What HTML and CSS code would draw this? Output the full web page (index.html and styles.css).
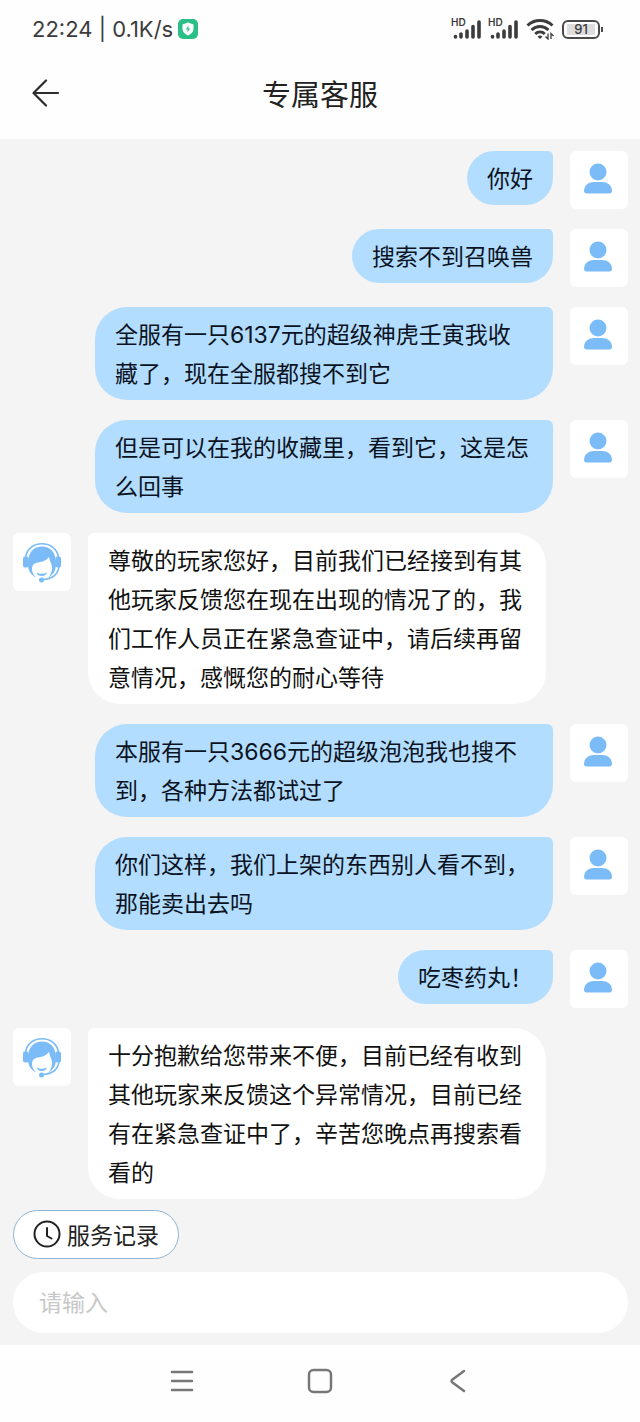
FILE: index.html
```html
<!DOCTYPE html>
<html lang="zh-CN">
<head>
<meta charset="utf-8">
<meta name="viewport" content="width=device-width, initial-scale=1">
<title>专属客服</title>
<link rel="stylesheet" href="styles.css">
</head>
<body>
<svg class="defs" aria-hidden="true">
  <symbol id="user" viewBox="0 0 58 58">
    <circle cx="28" cy="21" r="8.500"/>
    <path d="M14 40c0-6 5-9 10-9h8c5 0 10 3 10 9 0 1.600-1 2.500-2.500 2.500h-23C15 42.500 14 41.600 14 40z"/>
  </symbol>
  <symbol id="agent" viewBox="0 0 58 58">
    <path d="M12.500 25C14 6 44 6 45.500 25" fill="none" stroke="currentColor" stroke-width="1.600"/>
    <path d="M15 33C14 19 21 13.500 29 13.500S44 19 43 33c-.5 5-3 9-7.500 11.500 2.300-3 3.500-6 3.500-9.500 0-4-2-6-3-11-3 4-8 5-13 6-3 1-4 3-4 6 0 3 1.500 6 4 8.500C18 42 15.500 38 15 33z"/>
    <rect x="10" y="23.500" width="5.500" height="11" rx="1.800"/>
    <rect x="42.500" y="23.500" width="5.500" height="11" rx="1.800"/>
    <path d="M23.500 39.500q5.500 2.500 10.500 0-1.200 3.500-5.200 3.500t-5.300-3.500z"/>
    <path d="M46 34c-1.500 8-7.500 12-16 12.500" fill="none" stroke="currentColor" stroke-width="1.500"/>
    <circle cx="28.500" cy="47" r="2.500"/>
  </symbol>
  <symbol id="signal" viewBox="0 0 31 22">
    <path d="M3.500 19v-.5M9 19v-3M15 19v-6M21 19V8.500M27 19V4" fill="none" stroke="currentColor" stroke-width="3.600" stroke-linecap="round"/>
  </symbol>
</svg>

<header class="status">
  <div class="status-left">
    <span>22:24 | 0.1K/s</span>
    <svg class="shield" viewBox="0 0 20 20" aria-hidden="true">
      <rect width="20" height="20" rx="5" fill="#2bbf88"/>
      <path d="M10 3.500l5.500 2v4.500c0 3-2.200 5-5.500 6.500C6.700 15 4.500 13 4.500 10V5.500z" fill="#fff"/>
      <path d="M10.700 6.500L7.800 10.500h2l-.6 3.200 3-4.200h-2z" fill="#2bbf88"/>
    </svg>
  </div>
  <div class="status-right">
    <div class="cell"><span class="hd">HD</span><svg class="bars" aria-hidden="true"><use href="#signal"/></svg></div>
    <div class="cell"><span class="hd">HD</span><svg class="bars" aria-hidden="true"><use href="#signal"/></svg></div>
    <svg class="wifi" viewBox="0 0 28 22" aria-hidden="true">
      <g fill="none" stroke="currentColor" stroke-width="3">
        <path d="M1.500 7.500C8.500.8 19.500.8 26.500 7.500"/>
        <path d="M5.500 12C10.500 7.300 17.500 7.300 22.500 12"/>
        <path d="M9.200 16C12 13.300 16 13.300 18.800 16"/>
      </g>
      <path d="M11.500 18.500q2.500-2 5 0L14 21z" fill="currentColor"/>
      <path d="M22 15.500v5.500l-2.500-2.500M25 21v-5.500l2.500 2.500" fill="none" stroke="currentColor" stroke-width="1.300"/>
    </svg>
    <div class="battery"><span class="level">91</span></div>
  </div>
</header>

<div class="titlebar">
  <button class="back" type="button" aria-label="返回">
    <svg viewBox="0 0 28 28" aria-hidden="true"><path d="M26 14H1.500M14 1.500L1.500 14 14 26.500" fill="none" stroke="currentColor" stroke-width="2.200" stroke-linecap="round" stroke-linejoin="round"/></svg>
  </button>
  <h1 class="title">专属客服</h1>
</div>

<main class="chat">
  <div class="row mine"><p class="bubble">你好</p><svg class="avatar"><use href="#user"/></svg></div>
  <div class="row mine"><p class="bubble">搜索不到召唤兽</p><svg class="avatar"><use href="#user"/></svg></div>
  <div class="row mine"><p class="bubble">全服有一只6137元的超级神虎壬寅我收藏了，现在全服都搜不到它</p><svg class="avatar"><use href="#user"/></svg></div>
  <div class="row mine"><p class="bubble">但是可以在我的收藏里，看到它，这是怎么回事</p><svg class="avatar"><use href="#user"/></svg></div>
  <div class="row"><svg class="avatar"><use href="#agent"/></svg><p class="bubble">尊敬的玩家您好，目前我们已经接到有其他玩家反馈您在现在出现的情况了的，我们工作人员正在紧急查证中，请后续再留意情况，感慨您的耐心等待</p></div>
  <div class="row mine"><p class="bubble">本服有一只3666元的超级泡泡我也搜不到，各种方法都试过了</p><svg class="avatar"><use href="#user"/></svg></div>
  <div class="row mine"><p class="bubble">你们这样，我们上架的东西别人看不到，那能卖出去吗</p><svg class="avatar"><use href="#user"/></svg></div>
  <div class="row mine"><p class="bubble">吃枣药丸！</p><svg class="avatar"><use href="#user"/></svg></div>
  <div class="row"><svg class="avatar"><use href="#agent"/></svg><p class="bubble">十分抱歉给您带来不便，目前已经有收到其他玩家来反馈这个异常情况，目前已经有在紧急查证中了，辛苦您晚点再搜索看看的</p></div>
</main>

<footer class="composer">
  <button class="record" type="button">
    <svg class="clock" viewBox="0 0 28 28" aria-hidden="true"><g fill="none" stroke="currentColor" stroke-width="2" stroke-linecap="round" stroke-linejoin="round"><circle cx="14" cy="14" r="12.500"/><path d="M14 8v8l4.500 2.500"/></g></svg>
    服务记录
  </button>
  <input class="entry" type="text" placeholder="请输入" aria-label="请输入">
</footer>

<nav class="system">
  <button type="button" aria-label="最近任务"><svg viewBox="0 0 26 26"><path d="M3 4h20M3 13h20M3 22h20"/></svg></button>
  <button type="button" aria-label="主屏幕"><svg viewBox="0 0 26 26"><rect x="2" y="2" width="22" height="22" rx="4.500"/></svg></button>
  <button type="button" aria-label="返回"><svg viewBox="0 0 26 26"><path d="M19 3L7.500 11.500q-2 1.500 0 3L19 23"/></svg></button>
</nav>
</body>
</html>
```

FILE: styles.css
```css
* {
  box-sizing: border-box;
}

body {
  margin: 0;
  background: #fefefe;
  color: #111;
  font-family: Inter, "Noto Sans CJK SC", sans-serif;
  font-size: 23px;
}

button,
input {
  font: inherit;
}

button {
  padding: 0;
  border: 0;
  background: none;
  cursor: pointer;
}

svg {
  display: block;
  flex: none;
}

.defs {
  display: none;
}

.status {
  display: flex;
  align-items: center;
  justify-content: space-between;
  height: 58px;
  padding: 0 40px 0 32px;
  color: #3c3c3c;
  font-size: 22px;
}

.status-left,
.status-right {
  display: flex;
  align-items: center;
}

.status-left {
  gap: 5px;
}

.status-right {
  gap: 6px;
}

.shield {
  width: 20px;
  height: 20px;
}

.cell {
  position: relative;
}

.hd {
  position: absolute;
  top: 0;
  left: -1px;
  font-size: 10px;
  font-weight: 600;
  line-height: 8px;
}

.bars {
  width: 31px;
  height: 22px;
}

.wifi {
  width: 28px;
  height: 22px;
}

.battery {
  position: relative;
  display: flex;
  width: 38px;
  height: 19px;
  margin-left: 2px;
  padding: 2px 3px;
  border: 2px solid #4a4a4a;
  border-radius: 6px;
}

.battery::after {
  content: "";
  position: absolute;
  top: 5px;
  right: -5px;
  width: 2px;
  height: 5px;
  background: #4a4a4a;
}

.level {
  flex: 1;
  background: #dedede;
  font-size: 13px;
  font-weight: 500;
  line-height: 11px;
  text-align: center;
}

.titlebar {
  display: grid;
  grid-template-columns: 28px 1fr 28px;
  align-items: center;
  height: 81px;
  padding: 0 32px 12px;
}

.back {
  color: #2d2d2d;
}

.back svg {
  width: 28px;
  height: 28px;
}

.title {
  margin: 0;
  font-size: 29px;
  font-weight: 400;
  text-align: center;
  color: #222;
}

.chat {
  display: flex;
  flex-direction: column;
  gap: 20px;
  padding: 12px 12px 11px 13px;
  background: #f4f4f4;
}

.row {
  display: flex;
  align-items: flex-start;
  gap: 17px;
}

.mine {
  justify-content: flex-end;
}

.avatar {
  width: 58px;
  height: 58px;
  border-radius: 6px;
  background: #fff;
  color: #7bbcf8;
  fill: #7bbcf8;
}

.bubble {
  max-width: calc(100% - 157px);
  margin: 0;
  padding: 9px 20px 6px;
  border-radius: 6px 32px 32px 32px;
  background: #fff;
  line-height: 39px;
}

.mine .bubble {
  border-radius: 32px 6px 32px 32px;
  background: #b3ddff;
  color: #0b1322;
}

.composer {
  display: flex;
  flex-direction: column;
  align-items: flex-start;
  gap: 13px;
  padding: 0 12px 12px 13px;
  background: #f4f4f4;
}

.record {
  display: flex;
  align-items: center;
  gap: 6px;
  height: 49px;
  padding: 0 19px 2px;
  border: 1px solid #91b4d3;
  border-radius: 25px;
  background: #fff;
  color: #222;
}

.clock {
  width: 28px;
  height: 28px;
}

.entry {
  width: 100%;
  height: 61px;
  padding: 0 26px;
  border: 0;
  border-radius: 31px;
  background: #fff;
  color: #111;
}

.entry::placeholder {
  color: #c8c8c8;
  opacity: 1;
}

.system {
  display: flex;
  justify-content: center;
  gap: 112px;
  padding: 23px 0 28px;
}

.system svg {
  width: 26px;
  height: 26px;
  fill: none;
  stroke: #777;
  stroke-width: 2.5;
  stroke-linecap: round;
  stroke-linejoin: round;
}
```
